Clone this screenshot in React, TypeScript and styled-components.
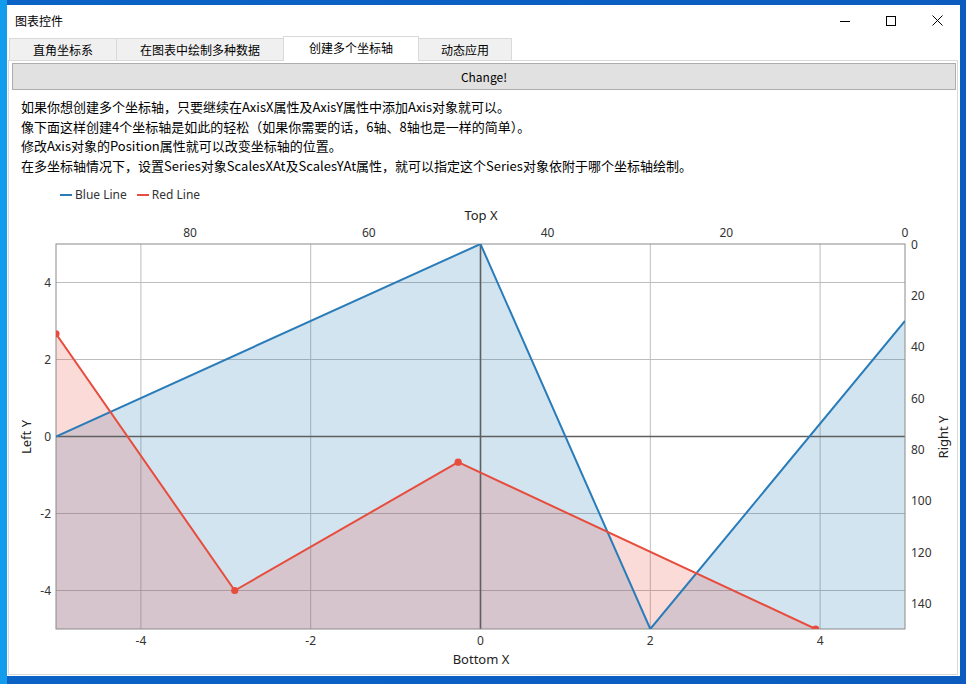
import React from "react";
import styled, { createGlobalStyle } from "styled-components";

const GlobalStyle = createGlobalStyle`
  html, body {
    margin: 0;
    padding: 0;
    background: #0a6fd0;
  }
  * {
    box-sizing: border-box;
  }
`;

const UI_FONT = `"Noto Sans CJK SC", "Noto Sans", sans-serif`;
const CHART_FONT = `"Noto Sans", "Liberation Sans", sans-serif`;

const Desktop = styled.div`
  width: 966px;
  height: 684px;
  padding: 5px 6px 8px 7px;
  background: linear-gradient(90deg, #129ceb 0px, #129ceb 7px, #0b63c6 7px, #0c5cbf 100%);
  overflow: hidden;
`;

const Window = styled.div`
  width: 953px;
  height: 671px;
  background: #fff;
  display: flex;
  flex-direction: column;
  font-family: ${UI_FONT};
  color: #000;
`;

const TitleBar = styled.div`
  height: 31px;
  display: flex;
  align-items: center;
  padding-left: 8px;
  flex-shrink: 0;
`;

const Title = styled.span`
  font-size: 12px;
  line-height: 16px;
`;

const Controls = styled.div`
  margin-left: auto;
  display: flex;
  height: 100%;
`;

const ControlButton = styled.div`
  width: 46px;
  height: 31px;
  display: flex;
  align-items: center;
  justify-content: center;
`;

const TabBar = styled.div`
  height: 24px;
  display: flex;
  align-items: flex-end;
  padding-left: 2px;
  flex-shrink: 0;
  position: relative;
  z-index: 1;
`;

const Tab = styled.div<{ $width: number; $active?: boolean }>`
  width: ${(p) => p.$width}px;
  height: ${(p) => (p.$active ? 25 : 22)}px;
  margin-bottom: ${(p) => (p.$active ? -1 : 0)}px;
  margin-left: -1px;
  &:first-child {
    margin-left: 0;
  }
  background: ${(p) => (p.$active ? "#fff" : "#f0f0f0")};
  border: 1px solid #d9d9d9;
  border-bottom: none;
  position: relative;
  z-index: ${(p) => (p.$active ? 2 : 1)};
  display: flex;
  align-items: center;
  justify-content: center;
  font-size: 12px;
  line-height: 16px;
  padding-bottom: ${(p) => (p.$active ? 3 : 0)}px;
`;

const Panel = styled.div`
  flex: 1;
  margin: 0 2px 1px 1px;
  border: 1px solid #d9d9d9;
  display: flex;
  flex-direction: column;
  min-height: 0;
`;

const ChangeButton = styled.div`
  height: 27px;
  margin: 2px 1px 0 3px;
  background: #e1e1e1;
  border: 1px solid #adadad;
  display: flex;
  align-items: center;
  justify-content: center;
  font-size: 12px;
  line-height: 16px;
`;

const Description = styled.div`
  margin: 7px 0 0 12px;
  font-size: 13px;
  line-height: 19.7px;
`;

const Legend = styled.div`
  display: flex;
  align-items: center;
  height: 16px;
  margin: 11px 0 0 51px;
  font-family: ${CHART_FONT};
  font-size: 12px;
  color: #333;
`;

const LegendItem = styled.div`
  display: flex;
  align-items: center;
  margin-right: 10px;
`;

const Swatch = styled.span<{ $color: string }>`
  display: inline-block;
  width: 12px;
  height: 2px;
  background: ${(p) => p.$color};
  margin-right: 3px;
`;

const ChartSvg = styled.svg`
  display: block;
  margin-top: 2px;
`;

const TickLabel = styled.text`
  font-family: ${CHART_FONT};
  font-size: 12px;
  fill: #333;
`;

const AxisTitle = styled.text`
  font-family: ${CHART_FONT};
  font-size: 13px;
  fill: #222;
`;

// plot area in page coordinates
const L = 56;
const R = 905;
const T = 244;
const B = 629;
const OX = 9;
const OY = 205;

const xb = (v: number) => L + ((v + 5) / 10) * (R - L);
const yl = (v: number) => B - ((v + 5) / 10) * (B - T);
const xt = (v: number) => R - (v / 95) * (R - L);
const yr = (v: number) => T + (v / 150) * (B - T);

const BLUE = "#2a7cb9";
const RED = "#e74c3c";

const bluePts: [number, number][] = [
  [-5, 0],
  [0, 5],
  [2, -5],
  [5, 3],
].map(([x, y]) => [xb(x), yl(y)]);

const redPts: [number, number][] = [
  [95, 35],
  [75, 135],
  [50, 85],
  [10, 150],
].map(([x, y]) => [xt(x), yr(y)]);

const toPoints = (pts: [number, number][]) => pts.map((p) => p.join(",")).join(" ");
const toArea = (pts: [number, number][]) =>
  toPoints([[pts[0][0], B], ...pts, [pts[pts.length - 1][0], B]]);

const Chart: React.FC = () => {
  const gridX = [-4, -2, 2, 4];
  const gridY = [-4, -2, 2, 4];
  return (
    <ChartSvg width={949} height={465}>
      <defs>
        <clipPath id="plot">
          <rect x={L} y={T} width={R - L} height={B - T} />
        </clipPath>
      </defs>
      <g transform={`translate(${-OX},${-OY})`}>
        {gridX.map((v) => (
          <line key={`gx${v}`} x1={xb(v)} x2={xb(v)} y1={T} y2={B} stroke="#bdbdbd" strokeWidth={1} />
        ))}
        {gridY.map((v) => (
          <line key={`gy${v}`} x1={L} x2={R} y1={yl(v)} y2={yl(v)} stroke="#bdbdbd" strokeWidth={1} />
        ))}
        <g clipPath="url(#plot)">
          <polygon points={toArea(bluePts)} fill="#1f77b4" fillOpacity={0.2} />
          <polygon points={toArea(redPts)} fill={RED} fillOpacity={0.2} />
        </g>
        <line x1={xb(0)} x2={xb(0)} y1={T} y2={B} stroke="#5f5f5f" strokeWidth={1.6} />
        <line x1={L} x2={R} y1={yl(0)} y2={yl(0)} stroke="#5f5f5f" strokeWidth={1.6} />
        <rect x={L} y={T} width={R - L} height={B - T} fill="none" stroke="#8a8a8a" strokeWidth={1} />
        <g clipPath="url(#plot)">
          <polyline points={toPoints(bluePts)} fill="none" stroke={BLUE} strokeWidth={2} strokeLinejoin="round" />
          <polyline points={toPoints(redPts)} fill="none" stroke={RED} strokeWidth={2} strokeLinejoin="round" />
          {redPts.map(([x, y], i) => (
            <circle key={i} cx={x} cy={y} r={3.6} fill={RED} />
          ))}
        </g>

        {[-4, -2, 0, 2, 4].map((v) => (
          <TickLabel key={`b${v}`} x={xb(v)} y={640} textAnchor="middle" dominantBaseline="central">
            {v}
          </TickLabel>
        ))}
        {[-4, -2, 0, 2, 4].map((v) => (
          <TickLabel key={`l${v}`} x={51} y={yl(v)} textAnchor="end" dominantBaseline="central">
            {v}
          </TickLabel>
        ))}
        {[0, 20, 40, 60, 80].map((v) => (
          <TickLabel key={`t${v}`} x={xt(v)} y={232} textAnchor="middle" dominantBaseline="central">
            {v}
          </TickLabel>
        ))}
        {[0, 20, 40, 60, 80, 100, 120, 140].map((v) => (
          <TickLabel key={`r${v}`} x={911} y={yr(v)} textAnchor="start" dominantBaseline="central">
            {v}
          </TickLabel>
        ))}

        <AxisTitle x={481} y={215} textAnchor="middle" dominantBaseline="central">
          Top X
        </AxisTitle>
        <AxisTitle x={481} y={659} textAnchor="middle" dominantBaseline="central">
          Bottom X
        </AxisTitle>
        <AxisTitle
          x={26}
          y={437}
          textAnchor="middle"
          dominantBaseline="central"
          transform="rotate(-90 26 437)"
        >
          Left Y
        </AxisTitle>
        <AxisTitle
          x={943}
          y={437}
          textAnchor="middle"
          dominantBaseline="central"
          transform="rotate(-90 943 437)"
        >
          Right Y
        </AxisTitle>
      </g>
    </ChartSvg>
  );
};

const tabs = [
  { label: "直角坐标系", width: 108 },
  { label: "在图表中绘制多种数据", width: 168 },
  { label: "创建多个坐标轴", width: 136, active: true },
  { label: "动态应用", width: 94 },
];

export default function App() {
  return (
    <>
      <GlobalStyle />
      <Desktop>
        <Window>
          <TitleBar>
            <Title>图表控件</Title>
            <Controls>
              <ControlButton>
                <svg width="10" height="10" viewBox="0 0 10 10" shapeRendering="crispEdges">
                  <line x1="0" y1="5.5" x2="10" y2="5.5" stroke="#000" strokeWidth="1" />
                </svg>
              </ControlButton>
              <ControlButton>
                <svg width="10" height="10" viewBox="0 0 10 10" shapeRendering="crispEdges">
                  <rect x="0.5" y="0.5" width="9" height="9" fill="none" stroke="#000" strokeWidth="1" />
                </svg>
              </ControlButton>
              <ControlButton>
                <svg width="11" height="11" viewBox="0 0 11 11">
                  <path d="M0.5 0.5 L10.5 10.5 M10.5 0.5 L0.5 10.5" stroke="#000" strokeWidth="1" />
                </svg>
              </ControlButton>
            </Controls>
          </TitleBar>
          <TabBar>
            {tabs.map((t) => (
              <Tab key={t.label} $width={t.width} $active={t.active}>
                {t.label}
              </Tab>
            ))}
          </TabBar>
          <Panel>
            <ChangeButton>Change!</ChangeButton>
            <Description>
              <div>如果你想创建多个坐标轴，只要继续在AxisX属性及AxisY属性中添加Axis对象就可以。</div>
              <div>像下面这样创建4个坐标轴是如此的轻松（如果你需要的话，6轴、8轴也是一样的简单）。</div>
              <div>修改Axis对象的Position属性就可以改变坐标轴的位置。</div>
              <div>在多坐标轴情况下，设置Series对象ScalesXAt及ScalesYAt属性，就可以指定这个Series对象依附于哪个坐标轴绘制。</div>
            </Description>
            <Legend>
              <LegendItem>
                <Swatch $color={BLUE} />
                Blue Line
              </LegendItem>
              <LegendItem>
                <Swatch $color={RED} />
                Red Line
              </LegendItem>
            </Legend>
            <Chart />
          </Panel>
        </Window>
      </Desktop>
    </>
  );
}
